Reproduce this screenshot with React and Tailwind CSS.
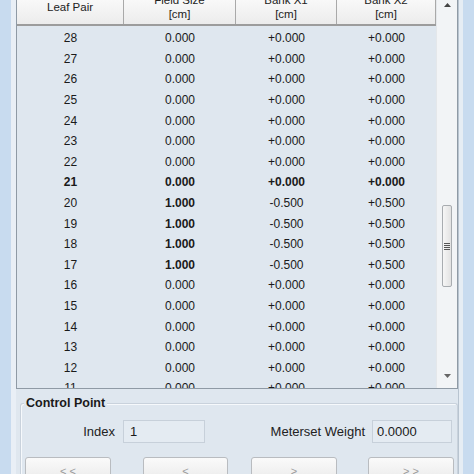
import React from "react";

const rows = [
  ["28", "0.000", "+0.000", "+0.000"],
  ["27", "0.000", "+0.000", "+0.000"],
  ["26", "0.000", "+0.000", "+0.000"],
  ["25", "0.000", "+0.000", "+0.000"],
  ["24", "0.000", "+0.000", "+0.000"],
  ["23", "0.000", "+0.000", "+0.000"],
  ["22", "0.000", "+0.000", "+0.000"],
  ["21", "0.000", "+0.000", "+0.000"],
  ["20", "1.000", "-0.500", "+0.500"],
  ["19", "1.000", "-0.500", "+0.500"],
  ["18", "1.000", "-0.500", "+0.500"],
  ["17", "1.000", "-0.500", "+0.500"],
  ["16", "0.000", "+0.000", "+0.000"],
  ["15", "0.000", "+0.000", "+0.000"],
  ["14", "0.000", "+0.000", "+0.000"],
  ["13", "0.000", "+0.000", "+0.000"],
  ["12", "0.000", "+0.000", "+0.000"],
  ["11", "0.000", "+0.000", "+0.000"],
];

const font = { fontFamily: '"Liberation Sans", Arial, sans-serif' };

function HeaderCell({ w, top, bottom, last }) {
  return (
    <div
      className={`${w} h-full flex flex-col items-center justify-center pb-[5px] leading-[14px] text-[11.5px] text-[#222] ${
        last ? "" : "border-r border-[#a9a9a9]"
      }`}
    >
      {top && <span>{top}</span>}
      {bottom && <span>{bottom}</span>}
    </div>
  );
}

export default function App() {
  return (
    <div
      className="w-[474px] h-[474px] overflow-hidden flex bg-[#dfe7ef] text-[#1a1a1a]"
      style={font}
    >
      {/* left window edge */}
      <div className="w-[11px] h-full bg-[#c8dbef] shrink-0" />
      <div className="w-[5px] h-full bg-[#e9eff6] shrink-0" />

      {/* main */}
      <div className="w-[442px] h-full shrink-0 flex flex-col">
        {/* table */}
        <div className="h-[395px] -mt-[6px] shrink-0 flex border border-[#8f9aa5] bg-[#dfe7ef]">
          <div className="w-[419px] flex flex-col overflow-hidden">
            <div className="h-[31px] shrink-0 flex bg-gradient-to-b from-[#fbfbfb] to-[#ececec] border-b-2 border-[#9c9c9c]">
              <HeaderCell w="w-[107px]" top="Leaf Pair" />
              <HeaderCell w="w-[112px]" top="Field Size" bottom="[cm]" />
              <HeaderCell w="w-[101px]" top="Bank X1" bottom="[cm]" />
              <HeaderCell w="w-[99px]" top="Bank X2" bottom="[cm]" />
            </div>
            <div className="flex-1 overflow-hidden pt-[2px] text-[12px]">
              {rows.map((r, i) => {
                const bold = r[0] === "21";
                const fsBold = ["17", "18", "19", "20"].includes(r[0]);
                return (
                  <div
                    key={i}
                    className={`h-[20.6px] flex items-center ${bold ? "font-bold" : ""}`}
                  >
                    <div className="w-[107px] text-center">{r[0]}</div>
                    <div className={`w-[112px] text-center ${fsBold ? "font-bold" : ""}`}>{r[1]}</div>
                    <div className="w-[101px] text-center">{r[2]}</div>
                    <div className="w-[99px] text-center">{r[3]}</div>
                  </div>
                );
              })}
            </div>
          </div>
          {/* scrollbar */}
          <div className="w-[21px] flex flex-col bg-[#f2f4f6] border-l border-[#e4e7ea]">
            <div className="h-[12px] flex items-end justify-center">
              <svg width="7" height="4" viewBox="0 0 7 4">
                <path d="M0 4 L3.5 0 L7 4 Z" fill="#444" />
              </svg>
            </div>
            <div className="h-[198px]" />
            <div className="mx-[5px] h-[82px] rounded-[2px] border border-[#a8acb0] bg-gradient-to-r from-[#f6f6f6] to-[#e2e2e2] flex items-center justify-center">
              <div className="flex flex-col gap-[1px]">
                <div className="w-[6px] h-[1px] bg-[#555]" />
                <div className="w-[6px] h-[1px] bg-[#555]" />
                <div className="w-[6px] h-[1px] bg-[#555]" />
                <div className="w-[6px] h-[1px] bg-[#555]" />
              </div>
            </div>
            <div className="flex-1" />
            <div className="h-[14px] flex items-start justify-center">
              <svg width="7" height="4" viewBox="0 0 7 4">
                <path d="M0 0 L3.5 4 L7 0 Z" fill="#666" />
              </svg>
            </div>
          </div>
        </div>

        {/* control point group */}
        <div className="relative mt-[14px] ml-[4px] flex-1 border border-[#c9d2dc] rounded-[3px] border-b-0 shadow-[inset_1px_1px_0_#f6f9fc]">
          <div className="absolute -top-[9px] left-[3px] px-[2px] bg-[#dfe7ef] text-[12.5px] font-bold leading-[16px]">
            Control Point
          </div>
          <div className="flex items-center mt-[16px] h-[23px] text-[13px]">
            <div className="w-[94px] text-right text-[#222]">Index</div>
            <div className="ml-[8px] w-[82px] h-[23px] border border-[#c7d0da] bg-[#e4ebf2] pl-[6px] flex items-center">
              1
            </div>
            <div className="w-[160px] text-right text-[#222]">Meterset Weight</div>
            <div className="ml-[7px] w-[80px] h-[23px] border border-[#c7d0da] bg-[#e4ebf2] pl-[4px] flex items-center">
              0.0000
            </div>
          </div>
          <div className="flex mt-[14px] text-[11px] text-[#9a9a9a]">
            <div className="ml-[4px] w-[86px] h-[24px] rounded-[3px] border border-[#b9bcc0] bg-gradient-to-b from-[#fafafa] to-[#ebebeb] flex justify-center pt-[5px]">
              &lt; &lt;
            </div>
            <div className="ml-[32px] w-[85px] h-[24px] rounded-[3px] border border-[#b9bcc0] bg-gradient-to-b from-[#fafafa] to-[#ebebeb] flex justify-center pt-[5px]">
              &lt;
            </div>
            <div className="ml-[23px] w-[86px] h-[24px] rounded-[3px] border border-[#b9bcc0] bg-gradient-to-b from-[#fafafa] to-[#ebebeb] flex justify-center pt-[5px]">
              &gt;
            </div>
            <div className="ml-[31px] w-[86px] h-[24px] rounded-[3px] border border-[#b9bcc0] bg-gradient-to-b from-[#fafafa] to-[#ebebeb] flex justify-center pt-[5px]">
              &gt; &gt;
            </div>
          </div>
        </div>
      </div>

      {/* right window edge */}
      <div className="w-[5px] h-full bg-[#e6edf4] border-l border-[#b8c4d0] shrink-0" />
      <div className="flex-1 h-full bg-[#c8dbef]" />
    </div>
  );
}
